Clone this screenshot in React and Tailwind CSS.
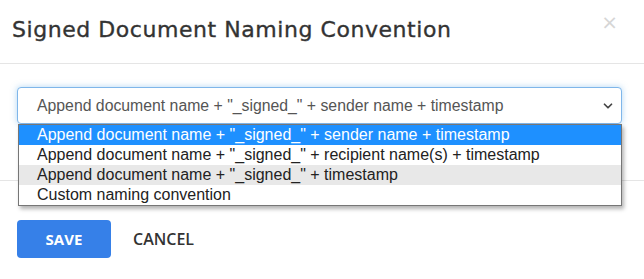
import { ChevronDown } from 'lucide-react'

const options = [
  'Append document name + "_signed_" + sender name + timestamp',
  'Append document name + "_signed_" + recipient name(s) + timestamp',
  'Append document name + "_signed_" + timestamp',
  'Custom naming convention',
]

export default function App() {
  return (
    <div className="relative w-[644px] h-[279px] bg-white overflow-hidden">
      <div className="h-[64px] flex items-center justify-between pl-[12px] pr-[26px] border-b border-[#e5e5e5]">
        <h1 className="text-[22px] text-[#333] font-['DejaVu_Sans',sans-serif] tracking-[0.55px] [-webkit-text-stroke:0.35px_#333] pb-[4px]">
          Signed Document Naming Convention
        </h1>
        <span className="text-[#d6d6d6] text-[20px] font-['DejaVu_Sans',sans-serif] -mt-[20px]">×</span>
      </div>

      <div className="h-[117px] pl-[17px] pr-[22px] pt-[23px] border-b border-[#e5e5e5]">
        <div className="relative">
          <div className="h-[37px] flex items-center justify-between pl-[19px] pr-[6px] rounded-[4px] border border-[#7fb6ea] shadow-[0_0_6px_rgba(102,175,233,0.5)] bg-white font-['Liberation_Sans',sans-serif] text-[15.8px] text-[#555]">
            <span>{options[0]}</span>
            <ChevronDown size={14} strokeWidth={3} className="text-[#444]" />
          </div>
          <ul className="absolute left-[1px] right-0 top-[37px] border border-[#767676] bg-white shadow-[2px_3px_4px_rgba(0,0,0,0.3)] font-['Liberation_Sans',sans-serif] text-[16px] leading-[20px] text-[#222] z-10">
            {options.map((o, i) => (
              <li
                key={o}
                className={
                  'pl-[18px] h-[20px] ' +
                  (i === 0 ? 'bg-[#1e90ff] text-white' : i === 2 ? 'bg-[#e8e8e8]' : '')
                }
              >
                {o}
              </li>
            ))}
          </ul>
        </div>
      </div>

      <div className="flex items-center gap-[22px] px-[17px] pt-[39px]">
        <button className="w-[94px] h-[38px] rounded-[4px] bg-[#3680e8] text-white text-[15px] font-bold font-['Open_Sans',sans-serif]">
          SAVE
        </button>
        <button className="text-[16px] text-[#333] font-semibold font-['Open_Sans',sans-serif]">CANCEL</button>
      </div>
    </div>
  )
}
